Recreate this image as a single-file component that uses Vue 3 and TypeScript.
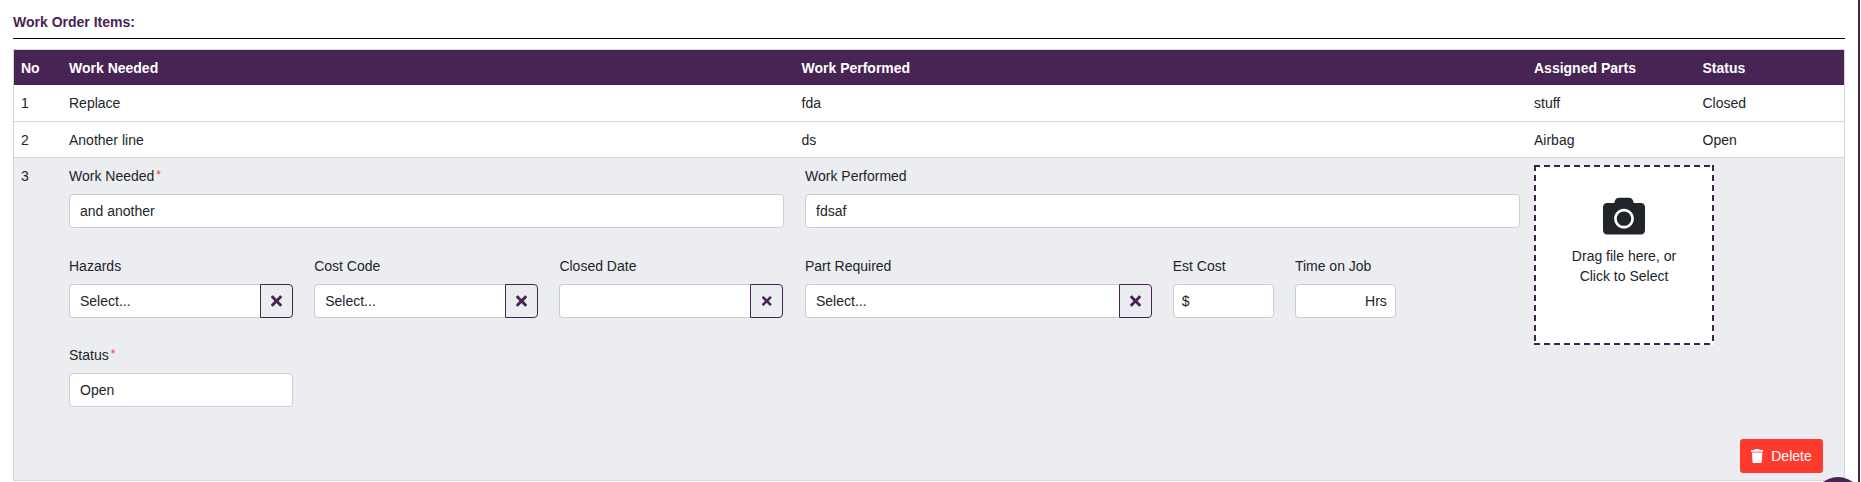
<script setup lang="ts">
interface Row {
  no: number
  needed: string
  performed: string
  parts: string
  status: string
}

const rows: Row[] = [
  { no: 1, needed: 'Replace', performed: 'fda', parts: 'stuff', status: 'Closed' },
  { no: 2, needed: 'Another line', performed: 'ds', parts: 'Airbag', status: 'Open' },
]

const timesPath =
  'M242.72 256l100.07-100.07c12.28-12.28 12.28-32.19 0-44.48l-22.24-22.24c-12.28-12.28-32.19-12.28-44.48 0L176 189.28 75.93 89.21c-12.28-12.28-32.19-12.28-44.48 0L9.21 111.45c-12.28 12.28-12.28 32.19 0 44.48L109.28 256 9.21 356.07c-12.28 12.28-12.28 32.19 0 44.48l22.24 22.24c12.28 12.28 32.2 12.28 44.48 0L176 322.72l100.07 100.07c12.28 12.28 32.2 12.28 44.48 0l22.24-22.24c12.28-12.28 12.28-32.19 0-44.48L242.72 256z'
</script>

<template>
  <div class="page">
    <div class="content">
      <h3 class="title">Work Order Items:</h3>
      <div class="table">
        <div class="row head">
          <div class="cell">No</div>
          <div class="cell">Work Needed</div>
          <div class="cell">Work Performed</div>
          <div class="cell">Assigned Parts</div>
          <div class="cell">Status</div>
        </div>
        <div v-for="r in rows" :key="r.no" class="row body">
          <div class="cell">{{ r.no }}</div>
          <div class="cell">{{ r.needed }}</div>
          <div class="cell">{{ r.performed }}</div>
          <div class="cell">{{ r.parts }}</div>
          <div class="cell">{{ r.status }}</div>
        </div>
        <div class="edit">
          <div class="edit-no">3</div>
          <div class="edit-main">
            <div class="form">
              <div class="fields">
                <div class="line line-top">
                  <div class="field half">
                    <label class="label">Work Needed<span class="req">*</span></label>
                    <div class="input">and another</div>
                  </div>
                  <div class="field half">
                    <label class="label">Work Performed</label>
                    <div class="input">fdsaf</div>
                  </div>
                </div>
                <div class="line line-mid">
                  <div class="group">
                    <div class="field third">
                      <label class="label">Hazards</label>
                      <div class="combo">
                        <div class="input joined">Select...</div>
                        <button class="clear" type="button"><svg class="x" viewBox="0 0 352 512"><path :d="timesPath" /></svg></button>
                      </div>
                    </div>
                    <div class="field third">
                      <label class="label">Cost Code</label>
                      <div class="combo">
                        <div class="input joined">Select...</div>
                        <button class="clear" type="button"><svg class="x" viewBox="0 0 352 512"><path :d="timesPath" /></svg></button>
                      </div>
                    </div>
                    <div class="field third">
                      <label class="label">Closed Date</label>
                      <div class="combo">
                        <div class="input joined"></div>
                        <button class="clear" type="button"><svg class="x small" viewBox="0 0 352 512"><path :d="timesPath" /></svg></button>
                      </div>
                    </div>
                  </div>
                  <div class="group">
                    <div class="field part">
                      <label class="label">Part Required</label>
                      <div class="combo">
                        <div class="input joined">Select...</div>
                        <button class="clear" type="button"><svg class="x" viewBox="0 0 352 512"><path :d="timesPath" /></svg></button>
                      </div>
                    </div>
                    <div class="field num">
                      <label class="label">Est Cost</label>
                      <div class="input dollar">$</div>
                    </div>
                    <div class="field num">
                      <label class="label">Time on Job</label>
                      <div class="input hrs">Hrs</div>
                    </div>
                  </div>
                </div>
                <div class="line line-bottom">
                  <div class="field third">
                    <label class="label">Status<span class="req">*</span></label>
                    <div class="input">Open</div>
                  </div>
                </div>
              </div>
              <div class="drop">
                <svg class="camera" viewBox="0 0 512 512">
                  <path d="M512 144v288c0 26.5-21.5 48-48 48H48c-26.5 0-48-21.5-48-48V144c0-26.5 21.5-48 48-48h88l12.3-32.9c7-18.7 24.9-31.1 44.9-31.1h125.5c20 0 37.9 12.4 44.9 31.1L376 96h88c26.5 0 48 21.5 48 48zM376 288c0-66.2-53.8-120-120-120s-120 53.8-120 120 53.8 120 120 120 120-53.8 120-120zm-32 0c0 48.5-39.5 88-88 88s-88-39.5-88-88 39.5-88 88-88 88 39.5 88 88z" />
                </svg>
                <p class="drop-text">Drag file here, or<br />Click to Select</p>
              </div>
            </div>
            <div class="actions">
              <button class="delete" type="button">
                <svg class="trash" viewBox="0 0 448 512">
                  <path d="M432 32H312l-9.4-18.7A24 24 0 0 0 281.1 0H166.8a23.72 23.72 0 0 0-21.4 13.3L136 32H16A16 16 0 0 0 0 48v32a16 16 0 0 0 16 16h416a16 16 0 0 0 16-16V48a16 16 0 0 0-16-16zM53.2 467a48 48 0 0 0 47.9 45h245.8a48 48 0 0 0 47.9-45L416 128H32z" />
                </svg>
                Delete
              </button>
            </div>
          </div>
        </div>
      </div>
    </div>
    <div class="fab"></div>
  </div>
</template>

<style>
html,
body {
  margin: 0;
  background: #fff;
}
</style>

<style scoped>
.page {
  position: relative;
  width: 1860px;
  height: 482px;
  overflow: hidden;
  box-sizing: border-box;
  padding: 0 0 0 13px;
  background: #fff;
  border-right: 2px solid #472453;
  font-family: "Liberation Sans", Arial, sans-serif;
  font-size: 14px;
  color: #212529;
}
.content {
  width: 1832px;
}
.title {
  margin: 0;
  box-sizing: border-box;
  height: 39px;
  padding-top: 14px;
  border-bottom: 1px solid #000;
  font-size: 14px;
  line-height: 16px;
  font-weight: 700;
  color: #472453;
}
.table {
  margin-top: 10px;
  border: 1px solid #d4d7dc;
}
.row {
  display: grid;
  grid-template-columns: 47px 732.5px 732.5px 168.5px 149.5px;
  align-items: center;
  box-sizing: border-box;
  height: 36px;
}
.cell {
  padding-left: 8px;
}
.cell:first-child {
  padding-left: 7px;
}
.head {
  height: 35px;
  background: #472453;
  color: #fff;
  font-weight: 700;
}
.body {
  background: #fff;
  border-bottom: 1px solid #d4d7dc;
}
.head + .body {
  height: 37px;
}
.edit {
  display: grid;
  grid-template-columns: 47px 1fr;
  background: #ecedf1;
  box-sizing: border-box;
  height: 322px;
}
.edit-no {
  padding: 8px 0 0 7px;
  line-height: 20px;
}
.edit-main {
  display: flex;
  flex-direction: column;
}
.form {
  display: flex;
  gap: 14px;
  padding-left: 8px;
  height: 273px;
  box-sizing: border-box;
}
.fields {
  width: 1451px;
  padding-top: 8px;
  box-sizing: border-box;
}
.line {
  display: flex;
  gap: 21px;
}
.line-mid {
  margin-top: 28px;
}
.line-bottom {
  margin-top: 27px;
}
.group {
  display: flex;
  width: 715px;
  gap: 21.2px;
}
.field {
  display: flex;
  flex-direction: column;
  gap: 8px;
}
.half {
  width: 715px;
}
.third {
  width: 224px;
}
.part {
  width: 346.5px;
}
.num {
  width: 101px;
}
.label {
  line-height: 20px;
  height: 20px;
  color: #212529;
}
.req {
  color: #ff3b30;
  margin-left: 2px;
  font-size: 12px;
  vertical-align: 2px;
  line-height: 1;
}
.input {
  box-sizing: border-box;
  height: 34px;
  padding: 0 10px;
  line-height: 32px;
  background: #fff;
  border: 1px solid #c9cdd8;
  border-radius: 4px;
}
.dollar {
  padding-left: 8px;
}
.hrs {
  padding-right: 8px;
  text-align: right;
}
.combo {
  display: flex;
}
.joined {
  flex: 1;
  min-width: 0;
  border-right: 0;
  border-radius: 4px 0 0 4px;
}
.clear {
  width: 33px;
  height: 34px;
  flex: none;
  padding: 0;
  display: flex;
  align-items: center;
  justify-content: center;
  background: transparent;
  border: 1px solid #472453;
  border-radius: 0 4px 4px 0;
}
.x {
  width: 11px;
  height: 16px;
  fill: #472453;
}
.x.small {
  width: 9.6px;
  height: 14px;
}
.drop {
  box-sizing: border-box;
  flex: none;
  width: 180px;
  height: 180px;
  margin-top: 7px;
  padding-top: 29.5px;
  background-color: #fff;
  background-image:
    repeating-linear-gradient(90deg, #40204d 0 6px, transparent 6px 10px),
    repeating-linear-gradient(90deg, #40204d 0 6px, transparent 6px 10px),
    repeating-linear-gradient(180deg, #40204d 0 6px, transparent 6px 10px),
    repeating-linear-gradient(180deg, #40204d 0 6px, transparent 6px 10px);
  background-size: 100% 2px, 100% 2px, 2px 100%, 2px 100%;
  background-position: 0 0, 0 100%, 0 0, 100% 0;
  background-repeat: no-repeat;
  display: flex;
  flex-direction: column;
  align-items: center;
}
.camera {
  width: 42px;
  height: 42px;
  fill: #212529;
}
.drop-text {
  margin: 9.5px 0 0;
  text-align: center;
  line-height: 20px;
}
.actions {
  display: flex;
  justify-content: flex-end;
  padding: 8px 21px 0 0;
}
.delete {
  display: flex;
  align-items: center;
  gap: 8px;
  box-sizing: border-box;
  width: 83px;
  height: 34px;
  padding: 0 0 0 11px;
  border: 0;
  border-radius: 3px;
  background: #ff3b30;
  color: #fff;
  font-family: inherit;
  font-size: 14px;
}
.trash {
  width: 12.25px;
  height: 14px;
  fill: #fff;
}
.fab {
  position: absolute;
  left: 1813px;
  top: 477px;
  width: 50px;
  height: 50px;
  border-radius: 50%;
  background: #472453;
}
</style>
